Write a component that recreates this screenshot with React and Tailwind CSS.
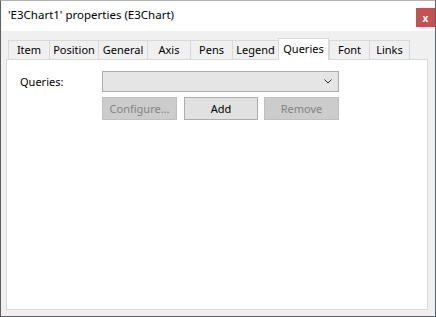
import React from "react";

const tabs = [
  { label: "Item", w: 41 },
  { label: "Position", w: 49 },
  { label: "General", w: 49 },
  { label: "Axis", w: 43 },
  { label: "Pens", w: 42 },
  { label: "Legend", w: 46 },
  { label: "Queries", w: 51, active: true },
  { label: "Font", w: 40 },
  { label: "Links", w: 41, last: true },
];

export default function App() {
  return (
    <div
      className="w-[436px] h-[317px] flex flex-col border border-[#56606b] border-t-[#aeb3b8] bg-white text-[11px] text-black overflow-hidden"
      style={{ fontFamily: '"Noto Sans", "Open Sans", sans-serif' }}
    >
      <div className="h-[30px] flex items-start justify-between bg-white shrink-0">
        <div className="pl-[7px] pt-[6px] leading-[16px] text-[11.5px]">'E3Chart1' properties (E3Chart)</div>
        <div className="mt-[7px] w-[19px] h-[19px] bg-[#c75050] flex items-center justify-center text-white font-bold text-[10px] leading-none">
          x
        </div>
      </div>
      <div className="flex-1 bg-[#f0f0f0] pl-[5px] pt-[7px]">
        <div className="flex items-end h-[21px] ml-[2px] relative z-10">
          {tabs.map((t) =>
            t.active ? (
              <div
                key={t.label}
                style={{ width: t.w }}
                className="h-[22px] -mb-px bg-white border border-b-0 border-[#d9d9d9] flex items-start justify-center pt-[2px] leading-[16px]"
              >
                {t.label}
              </div>
            ) : (
              <div
                key={t.label}
                style={{ width: t.w }}
                className={`h-[19px] bg-[#f0f0f0] border-t border-l border-[#d9d9d9] ${t.last ? "border-r" : ""} flex items-center justify-center leading-[16px]`}
              >
                {t.label}
              </div>
            )
          )}
        </div>
        <div className="w-[422px] h-[251px] bg-white border border-[#d9d9d9] pt-[11px] pl-[13px]">
          <div className="flex items-center">
            <div className="w-[82px] leading-[16px]">Queries:</div>
            <div className="w-[237px] h-[21px] bg-[#e5e5e5] border border-[#adadad] flex items-center justify-end pr-[6px]">
              <svg width="8" height="5" viewBox="0 0 8 5">
                <path d="M0.5 0.5 L4 4 L7.5 0.5" fill="none" stroke="#333" strokeWidth="1" />
              </svg>
            </div>
          </div>
          <div className="flex mt-[5px] ml-[82px]">
            <div className="w-[75px] h-[23px] bg-[#cccccc] border border-[#bfbfbf] text-[#838383] flex items-center justify-center leading-[16px]">
              Configure…
            </div>
            <div className="ml-[7px] w-[74px] h-[23px] bg-[#e1e1e1] border border-[#adadad] flex items-center justify-center leading-[16px]">
              Add
            </div>
            <div className="ml-[6px] w-[75px] h-[23px] bg-[#cccccc] border border-[#bfbfbf] text-[#838383] flex items-center justify-center leading-[16px]">
              Remove
            </div>
          </div>
        </div>
      </div>
    </div>
  );
}
